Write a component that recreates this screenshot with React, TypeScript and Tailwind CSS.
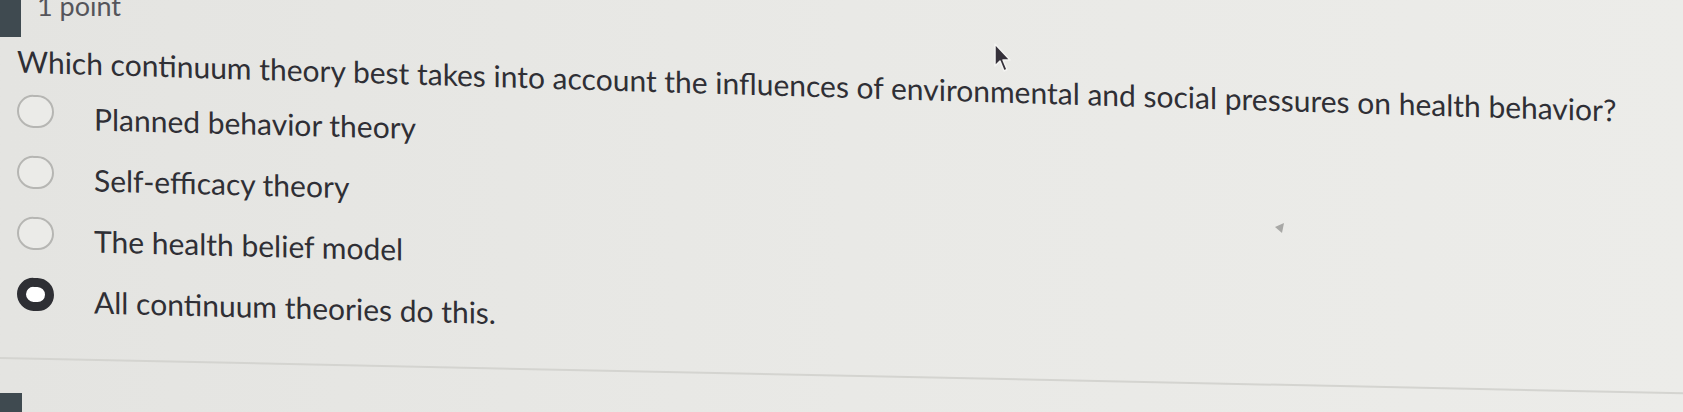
import React from "react";

const options = [
  { label: "Planned behavior theory", selected: false },
  { label: "Self-efficacy theory", selected: false },
  { label: "The health belief model", selected: false },
  { label: "All continuum theories do this.", selected: true },
];

export default function App() {
  return (
    <div
      className="relative w-[1683px] h-[412px] overflow-hidden bg-gradient-to-r from-[#e4e4e1] via-[#e9e9e6] to-[#ecece9] text-[#2f2f35]"
      style={{ fontFamily: "Lato, 'Open Sans', sans-serif" }}
    >
      <div className="flex flex-col">
        <div className="flex h-[37px]">
          <div className="w-[21px] h-[37px] bg-[#3f4a50]" />
          <div className="ml-[16px] -mt-[8px] text-[27px] leading-none text-[#55555b]">1 point</div>
        </div>
        <div className="mt-[8px] pl-[17px] text-[30px] leading-none whitespace-nowrap origin-top-left skew-y-[1.75deg]">
          Which continuum theory best takes into account the influences of environmental and social pressures on health behavior?
        </div>
        <div className="mt-[19px] flex flex-col origin-top-left skew-y-[1.5deg]">
          {options.map((o) => (
            <div key={o.label} className="flex h-[61px] pl-[17px]">
              {o.selected ? (
                <div className="w-[37px] h-[33px] rounded-full border-[9px] border-[#2e2f34] bg-white" />
              ) : (
                <div className="w-[37px] h-[33px] rounded-full border-2 border-[#b6b6b3] bg-[#ebebe8]" />
              )}
              <div className="ml-[40px] mt-[7px] text-[30px] leading-none whitespace-nowrap">{o.label}</div>
            </div>
          ))}
        </div>
        <div className="mt-[19px] h-[2px] w-full bg-[#d4d4d0] origin-top-left skew-y-[1.2deg]" />
        <div className="mt-[34px] w-[22px] h-[19px] bg-[#3f4a50]" />
      </div>
      <svg className="absolute left-[993px] top-[42px]" width="20" height="32" viewBox="0 0 20 32">
        <path d="M2 2 L2 24 L7 19 L11 29 L14 27.5 L10 18 L17 18 Z" fill="#35313a" stroke="#f4f4f2" strokeWidth="1.5" strokeLinejoin="round" />
      </svg>
      <svg className="absolute left-[1274px] top-[222px]" width="12" height="12" viewBox="0 0 12 12">
        <path d="M1 5 L10 1 L8 11 Z" fill="#a8a8a6" />
      </svg>
    </div>
  );
}
